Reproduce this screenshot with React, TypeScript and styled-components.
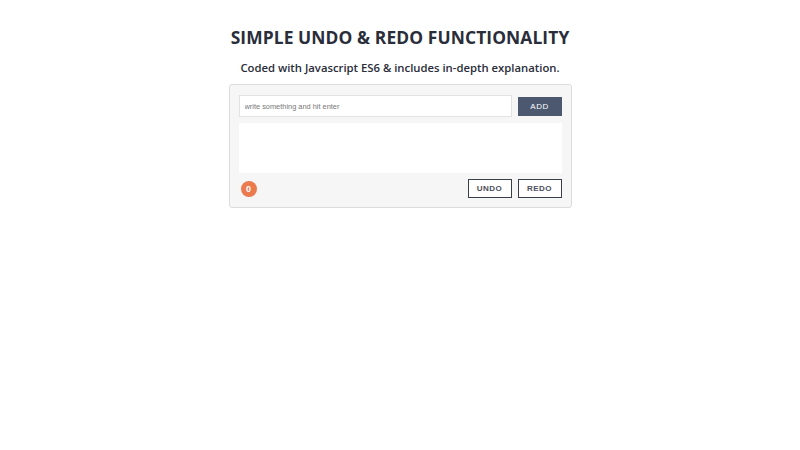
import styled, { createGlobalStyle } from 'styled-components';

const GlobalStyle = createGlobalStyle`
  body {
    margin: 0;
    background: #fff;
    font-family: 'Open Sans', sans-serif;
    color: #2a2d3a;
  }
`;

const Page = styled.div`
  display: flex;
  flex-direction: column;
  align-items: center;
  padding-top: 25px;
`;
const Title = styled.h1`
  margin: 0;
  font-size: 17.4px;
  font-weight: 700;
  line-height: 24px;
  letter-spacing: 0.1px;
  color: #2a2d3a;
`;
const SubTitle = styled.h2`
  margin: 11px 0 0;
  font-size: 11.3px;
  font-weight: 600;
  line-height: 16px;
  color: #2a2d3a;
`;
const Card = styled.div`
  box-sizing: border-box;
  width: 343px;
  margin-top: 8px;
  padding: 10px 9px 9px 9px;
  background: #f6f6f6;
  border: 1px solid #dcdcdc;
  border-radius: 3px;
`;
const Row = styled.div`
  display: flex;
  align-items: center;
  gap: 6px;
`;
const Input = styled.input`
  box-sizing: border-box;
  flex: 1;
  height: 22px;
  padding: 0 5px;
  border: 1px solid #e2e2e2;
  background: #fff;
  font-family: 'Liberation Sans', Arial, sans-serif;
  font-size: 7.4px;
  color: #333;
  outline: none;
  &::placeholder {
    color: #777;
  }
`;
const Button = styled.button<{ $solid?: boolean }>`
  box-sizing: border-box;
  width: 44px;
  height: 19px;
  padding: 0;
  border: ${(p) => (p.$solid ? 'none' : '1.5px solid #3a3f4c')};
  background: ${(p) => (p.$solid ? '#4b5870' : '#fff')};
  color: ${(p) => (p.$solid ? '#fff' : '#4a4f5a')};
  font-family: 'Liberation Sans', Arial, sans-serif;
  font-size: 8px;
  font-weight: ${(p) => (p.$solid ? 400 : 700)};
  letter-spacing: 0.5px;
  cursor: pointer;
`;
const List = styled.ul`
  height: 50px;
  margin: 6px 0 0;
  padding: 0;
  list-style: none;
  background: #fff;
`;
const Footer = styled.div`
  display: flex;
  align-items: center;
  justify-content: space-between;
  margin-top: 6px;
`;
const Badge = styled.span`
  display: flex;
  align-items: center;
  justify-content: center;
  width: 16px;
  height: 16px;
  margin-left: 2px;
  border-radius: 50%;
  background: #ec7a4f;
  color: #fff;
  font-family: 'Liberation Sans', Arial, sans-serif;
  font-size: 9px;
  font-weight: 700;
`;
const Actions = styled.div`
  display: flex;
  gap: 6px;
`;

const App = () => {
  return (
    <>
      <GlobalStyle />
      <Page>
        <Title>SIMPLE UNDO &amp; REDO FUNCTIONALITY</Title>
        <SubTitle>Coded with Javascript ES6 &amp; includes in-depth explanation.</SubTitle>
        <Card>
          <Row>
            <Input placeholder="write something and hit enter" />
            <Button $solid>ADD</Button>
          </Row>
          <List />
          <Footer>
            <Badge>0</Badge>
            <Actions>
              <Button>UNDO</Button>
              <Button>REDO</Button>
            </Actions>
          </Footer>
        </Card>
      </Page>
    </>
  );
};

export default App;
